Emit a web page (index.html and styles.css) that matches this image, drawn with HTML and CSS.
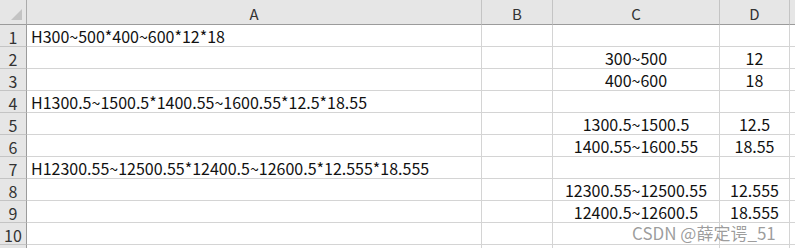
FILE: index.html
```html
<!DOCTYPE html>
<html>
<head>
<meta charset="utf-8">
<link rel="stylesheet" href="styles.css">
</head>
<body>
<div class="sheet">
  <div class="corner"><span class="tri"></span></div>
  <div class="colhdr">A</div><div class="colhdr">B</div><div class="colhdr">C</div><div class="colhdr">D</div><div class="colhdr last"></div>

  <div class="rowhdr">1</div><div class="cell left">H300~500*400~600*12*18</div><div class="cell"></div><div class="cell"></div><div class="cell"></div><div class="cell last"></div>
  <div class="rowhdr">2</div><div class="cell"></div><div class="cell"></div><div class="cell ctr">300~500</div><div class="cell ctr">12</div><div class="cell last"></div>
  <div class="rowhdr">3</div><div class="cell"></div><div class="cell"></div><div class="cell ctr">400~600</div><div class="cell ctr">18</div><div class="cell last"></div>
  <div class="rowhdr">4</div><div class="cell left">H1300.5~1500.5*1400.55~1600.55*12.5*18.55</div><div class="cell"></div><div class="cell"></div><div class="cell"></div><div class="cell last"></div>
  <div class="rowhdr">5</div><div class="cell"></div><div class="cell"></div><div class="cell ctr">1300.5~1500.5</div><div class="cell ctr">12.5</div><div class="cell last"></div>
  <div class="rowhdr">6</div><div class="cell"></div><div class="cell"></div><div class="cell ctr">1400.55~1600.55</div><div class="cell ctr">18.55</div><div class="cell last"></div>
  <div class="rowhdr">7</div><div class="cell left">H12300.55~12500.55*12400.5~12600.5*12.555*18.555</div><div class="cell"></div><div class="cell"></div><div class="cell"></div><div class="cell last"></div>
  <div class="rowhdr">8</div><div class="cell"></div><div class="cell"></div><div class="cell ctr">12300.55~12500.55</div><div class="cell ctr">12.555</div><div class="cell last"></div>
  <div class="rowhdr">9</div><div class="cell"></div><div class="cell"></div><div class="cell ctr">12400.5~12600.5</div><div class="cell ctr">18.555</div><div class="cell last"></div>
  <div class="rowhdr">10</div><div class="cell"></div><div class="cell"></div><div class="cell"></div><div class="cell"></div><div class="cell last"></div>
  <div class="rowhdr stub"></div><div class="cell stub"></div><div class="cell stub"></div><div class="cell stub"></div><div class="cell stub"></div><div class="cell stub last"></div>
</div>
<div class="watermark">CSDN @薛定谔_51</div>
</body>
</html>
```
FILE: styles.css
```css
html, body {
  margin: 0;
  padding: 0;
  background: #ffffff;
  overflow: hidden;
}
body {
  position: relative;
  width: 795px;
  height: 248px;
  font-family: "Noto Sans CJK SC", "Noto Sans", sans-serif;
  font-size: 16px;
  color: #111;
}
.sheet {
  display: grid;
  grid-template-columns: 27px 455px 71px 167px 70px 5px;
  grid-template-rows: 25px repeat(10, 22px) 3px;
}
.sheet > div {
  box-sizing: border-box;
  white-space: nowrap;
}
.corner {
  background: #e6e6e6;
  border-right: 1px solid #ababab;
  border-bottom: 1px solid #9b9b9b;
  position: relative;
}
.tri {
  position: absolute;
  right: 4px;
  bottom: 4px;
  width: 0;
  height: 0;
  border-left: 11px solid transparent;
  border-bottom: 11px solid #c3c3c3;
}
.colhdr {
  background: #e6e6e6;
  border-right: 1px solid #c4c4c4;
  border-bottom: 1px solid #9b9b9b;
  text-align: center;
  line-height: 28px;
  color: #333;
  font-size: 15px;
}
.colhdr.last { border-right: none; }
.rowhdr {
  background: #e6e6e6;
  border-right: 1px solid #9b9b9b;
  border-bottom: 1px solid #c4c4c4;
  text-align: center;
  line-height: 24px;
  color: #333;
  font-size: 16px;
}
.rowhdr.stub { border-bottom: none; }
.cell {
  border-right: 1px solid #d4d4d4;
  border-bottom: 1px solid #d4d4d4;
  line-height: 22px;
  position: relative;
  z-index: 1;
}
.cell.stub { border-bottom: none; }
.cell.last { border-right: none; }
.cell.left { padding-left: 4px; }
.cell.ctr { text-align: center; }
.watermark {
  position: absolute;
  left: 632px;
  top: 224px;
  font-size: 17px;
  line-height: 18px;
  color: rgba(140, 140, 140, 0.85);
  z-index: 2;
  white-space: nowrap;
}
```
